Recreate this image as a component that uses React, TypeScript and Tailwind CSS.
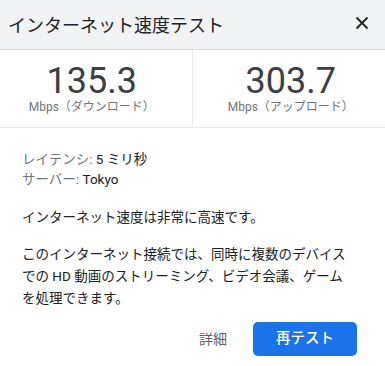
import React from 'react';

const font = { fontFamily: 'Roboto, "Noto Sans CJK JP", sans-serif' };

function Result({ value, label, className }: { value: string; label: string; className?: string }) {
  return (
    <div className={`flex flex-col items-center pt-[13px] pb-[12px] ${className ?? ''}`}>
      <div className="text-[36px] leading-[36px] text-[#3c4043]">{value}</div>
      <div className="text-[12px] leading-[16px] text-[#70757a]">{label}</div>
    </div>
  );
}

export default function App() {
  return (
    <div className="w-[385px] h-[366px] bg-white overflow-hidden" style={font}>
      <div className="h-[50px] bg-[#f1f3f4] border-b border-[#dadce0] flex items-center justify-between pl-[8px] pr-[12px]">
        <h1 className="text-[18px] text-[#202124] mt-[2px]">インターネット速度テスト</h1>
        <button className="w-[22px] h-[22px] flex items-center justify-center -mt-[4px]">
          <svg width="14" height="14" viewBox="0 0 14 14">
            <path d="M1.5 1.5 L12.5 12.5 M12.5 1.5 L1.5 12.5" stroke="#202124" strokeWidth="1.8" />
          </svg>
        </button>
      </div>

      <div className="grid grid-cols-2 border-b border-[#e8eaed]">
        <Result value="135.3" label="Mbps（ダウンロード）" className="border-r border-[#e8eaed] pr-[8px]" />
        <Result value="303.7" label="Mbps（アップロード）" className="pl-[4px]" />
      </div>

      <div className="pl-[22px] pr-[28px] pt-[21px] text-[13.5px] text-[#202124]">
        <div className="leading-[20px]">
          <span className="text-[#70757a]">レイテンシ: </span>5 ミリ秒
        </div>
        <div className="leading-[20px]">
          <span className="text-[#70757a]">サーバー: </span>Tokyo
        </div>
        <p className="leading-[20px] mt-[18px]">インターネット速度は非常に高速です。</p>
        <p className="leading-[22px] mt-[16px] w-[330px]">
          このインターネット接続では、同時に複数のデバイスでの HD 動画のストリーミング、ビデオ会議、ゲームを処理できます。
        </p>
        <div className="flex items-center justify-end gap-[26px] mt-[13px]">
          <button className="text-[14px] text-[#5f6368]">詳細</button>
          <button className="w-[104px] h-[34px] rounded-[5px] bg-[#1a73e8] text-white text-[14.5px] font-medium">
            再テスト
          </button>
        </div>
      </div>
    </div>
  );
}
